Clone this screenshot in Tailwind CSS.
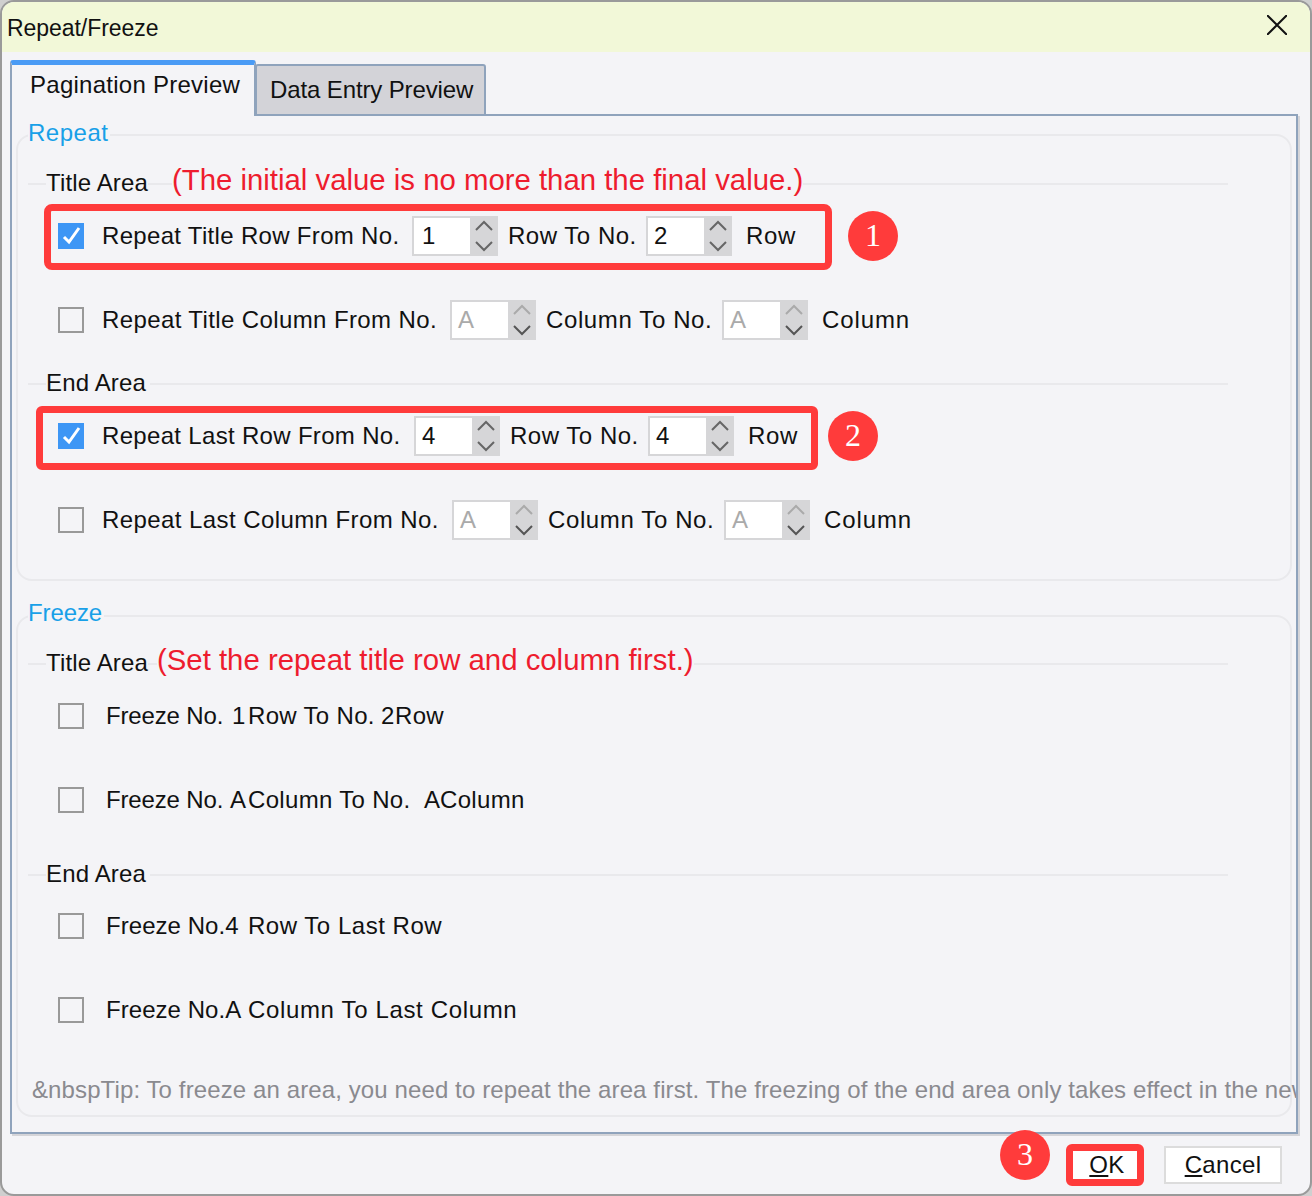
<!DOCTYPE html>
<html><head><meta charset="utf-8"><script src="https://cdn.jsdelivr.net/npm/@tailwindcss/browser@4"></script></head>
<body class="m-0">
<div class="w-[1312px] h-[1196px] overflow-hidden bg-[#cfcfcf] font-['Liberation_Sans',Arial,sans-serif] text-[24px] tracking-[0.32px] text-[#111]">
<div class="w-[1312px] h-[1196px] rounded-[14px] border-2 border-[#9a9a9a] bg-[#f4f4f7] flex flex-col overflow-hidden">
  <div class="relative h-[50px] shrink-0 bg-[#f2f8d8] flex items-center pl-[5px] pt-[2px] text-[23px] tracking-[-0.05px]">Repeat/Freeze
    <svg class="absolute left-[1265px] top-[13px]" width="20" height="20" viewBox="0 0 20 20"><path d="M0 0L20 20M20 0L0 20" stroke="#111" stroke-width="2" fill="none"/></svg>
  </div>
  <div class="flex h-[56px] mt-[8px] ml-[8px] shrink-0 items-end relative z-10">
    <div class="w-[246px] h-[56px] bg-[#f4f4f7] border-x-2 border-[#8fa3bc] border-t-[5px] border-t-[#4a9bf5] rounded-t-[3px] pl-[18px] pt-[2px] tracking-[0.26px]">Pagination Preview</div>
    <div class="-ml-[1px] w-[231px] h-[52px] bg-[#d3d3d8] border-2 border-[#8fa3bc] rounded-t-[3px] pl-[13px] pt-[6px] tracking-[-0.12px]">Data Entry Preview</div>
  </div>
  <div class="-mt-[2px] ml-[8px] mr-[12px] h-[1020px] shrink-0 border-2 border-[#8fa3bc] shadow-[2px_2px_0_#d4d4d8] overflow-hidden pt-[18px] px-[4px]">
    <section class="relative w-[1276px] h-[447px] border-2 border-[#e9e9ec] rounded-[16px] pt-[36px]">
      <div class="absolute left-[10px] -top-[21px] bg-[#f4f4f7] pr-[2px] text-[#18a0e8] tracking-[0.5px]">Repeat</div>
      <div class="relative h-[24px] ml-[10px]">
        <div class="absolute left-0 top-[11px] w-[1200px] h-[2px] bg-[#e9e9ec]"></div>
        <div class="absolute left-[18px] -top-[1px] h-[24px] leading-[24px] bg-[#f4f4f7] tracking-[0.15px]">Title Area</div>
        <div class="absolute left-[144px] -top-[8px] leading-[32px] text-[29.35px] tracking-normal text-[#ee1c2e] whitespace-nowrap bg-[#f4f4f7]">(The initial value is no more than the final value.)</div>
      </div>
      <div class="relative flex items-center h-[48px] mt-[16px] pl-[40px]">
        <div class="absolute left-[26px] -top-[8px] w-[788px] h-[66px] border-[7px] border-[#ff3b3b] rounded-[8px]"></div>
        <svg width="26" height="26" viewBox="0 0 26 26" class="shrink-0"><rect width="26" height="26" fill="#3d96f5"/><path d="M6 14l5 5 10-14" stroke="#fff" stroke-width="3" fill="none"/></svg>
        <span class="ml-[18px] w-[310px] whitespace-nowrap pb-[1px]">Repeat Title Row From No.</span>
        <div class="flex w-[86px] h-[40px] bg-[#d6d6d8] p-[2px] pr-0"><span class="w-[56px] bg-white pl-[8px] leading-[36px]">1</span><svg width="28" height="36" viewBox="0 0 28 36"><path d="M6 12l8-8 8 8M6 24l8 8 8-8" stroke="#666" stroke-width="2" fill="none"/></svg></div>
        <span class="ml-[10px] w-[138px] whitespace-nowrap pb-[1px] tracking-[0.52px]">Row To No.</span>
        <div class="flex w-[86px] h-[40px] bg-[#d6d6d8] p-[2px] pr-0"><span class="w-[56px] bg-white pl-[6px] leading-[36px]">2</span><svg width="28" height="36" viewBox="0 0 28 36"><path d="M6 12l8-8 8 8M6 24l8 8 8-8" stroke="#666" stroke-width="2" fill="none"/></svg></div>
        <span class="ml-[14px] whitespace-nowrap pb-[1px] tracking-[0.6px]">Row</span>
        <span class="absolute left-[830px] top-[-1px] w-[50px] h-[50px] rounded-full bg-[#ff3b3b] text-white font-['Liberation_Serif',serif] text-[32px] tracking-normal pb-[2px] flex items-center justify-center">1</span>
      </div>
      <div class="flex items-center h-[48px] mt-[36px] pl-[40px]">
        <span class="w-[26px] h-[26px] shrink-0 border-2 border-[#999]"></span>
        <span class="ml-[18px] w-[348px] whitespace-nowrap pb-[1px] tracking-[0.39px]">Repeat Title Column From No.</span>
        <div class="flex w-[86px] h-[40px] bg-[#d6d6d8] p-[2px] pr-0"><span class="w-[56px] bg-white pl-[6px] leading-[36px] text-[#aaa]">A</span><svg width="28" height="36" viewBox="0 0 28 36"><path d="M6 12l8-8 8 8" stroke="#aaa" stroke-width="2" fill="none"/><path d="M6 24l8 8 8-8" stroke="#555" stroke-width="2" fill="none"/></svg></div>
        <span class="ml-[10px] w-[176px] whitespace-nowrap pb-[1px] tracking-[0.62px]">Column To No.</span>
        <div class="flex w-[86px] h-[40px] bg-[#d6d6d8] p-[2px] pr-0"><span class="w-[56px] bg-white pl-[6px] leading-[36px] text-[#aaa]">A</span><svg width="28" height="36" viewBox="0 0 28 36"><path d="M6 12l8-8 8 8" stroke="#aaa" stroke-width="2" fill="none"/><path d="M6 24l8 8 8-8" stroke="#555" stroke-width="2" fill="none"/></svg></div>
        <span class="ml-[14px] whitespace-nowrap pb-[1px] tracking-[0.9px]">Column</span>
      </div>
      <div class="relative h-[24px] mt-[28px] ml-[10px]">
        <div class="absolute left-0 top-[11px] w-[1200px] h-[2px] bg-[#e9e9ec]"></div>
        <div class="absolute left-[18px] -top-[1px] h-[24px] leading-[24px] bg-[#f4f4f7] pr-[4px] tracking-[0.15px]">End Area</div>
      </div>
      <div class="relative flex items-center h-[48px] mt-[16px] pl-[40px]">
        <div class="absolute left-[18px] -top-[6px] w-[782px] h-[64px] border-[7px] border-[#ff3b3b] rounded-[6px]"></div>
        <svg width="26" height="26" viewBox="0 0 26 26" class="shrink-0"><rect width="26" height="26" fill="#3d96f5"/><path d="M6 14l5 5 10-14" stroke="#fff" stroke-width="3" fill="none"/></svg>
        <span class="ml-[18px] w-[312px] whitespace-nowrap pb-[1px]">Repeat Last Row From No.</span>
        <div class="flex w-[86px] h-[40px] bg-[#d6d6d8] p-[2px] pr-0"><span class="w-[56px] bg-white pl-[6px] leading-[36px]">4</span><svg width="28" height="36" viewBox="0 0 28 36"><path d="M6 12l8-8 8 8M6 24l8 8 8-8" stroke="#666" stroke-width="2" fill="none"/></svg></div>
        <span class="ml-[10px] w-[138px] whitespace-nowrap pb-[1px] tracking-[0.52px]">Row To No.</span>
        <div class="flex w-[86px] h-[40px] bg-[#d6d6d8] p-[2px] pr-0"><span class="w-[56px] bg-white pl-[6px] leading-[36px]">4</span><svg width="28" height="36" viewBox="0 0 28 36"><path d="M6 12l8-8 8 8M6 24l8 8 8-8" stroke="#666" stroke-width="2" fill="none"/></svg></div>
        <span class="ml-[14px] whitespace-nowrap pb-[1px] tracking-[0.6px]">Row</span>
        <span class="absolute left-[810px] top-[-1px] w-[50px] h-[50px] rounded-full bg-[#ff3b3b] text-white font-['Liberation_Serif',serif] text-[32px] tracking-normal pb-[2px] flex items-center justify-center">2</span>
      </div>
      <div class="flex items-center h-[48px] mt-[36px] pl-[40px]">
        <span class="w-[26px] h-[26px] shrink-0 border-2 border-[#999]"></span>
        <span class="ml-[18px] w-[350px] whitespace-nowrap pb-[1px] tracking-[0.42px]">Repeat Last Column From No.</span>
        <div class="flex w-[86px] h-[40px] bg-[#d6d6d8] p-[2px] pr-0"><span class="w-[56px] bg-white pl-[6px] leading-[36px] text-[#aaa]">A</span><svg width="28" height="36" viewBox="0 0 28 36"><path d="M6 12l8-8 8 8" stroke="#aaa" stroke-width="2" fill="none"/><path d="M6 24l8 8 8-8" stroke="#555" stroke-width="2" fill="none"/></svg></div>
        <span class="ml-[10px] w-[176px] whitespace-nowrap pb-[1px] tracking-[0.62px]">Column To No.</span>
        <div class="flex w-[86px] h-[40px] bg-[#d6d6d8] p-[2px] pr-0"><span class="w-[56px] bg-white pl-[6px] leading-[36px] text-[#aaa]">A</span><svg width="28" height="36" viewBox="0 0 28 36"><path d="M6 12l8-8 8 8" stroke="#aaa" stroke-width="2" fill="none"/><path d="M6 24l8 8 8-8" stroke="#555" stroke-width="2" fill="none"/></svg></div>
        <span class="ml-[14px] whitespace-nowrap pb-[1px] tracking-[0.9px]">Column</span>
      </div>
    </section>
    <section class="relative w-[1276px] h-[502px] mt-[34px] border-2 border-[#e9e9ec] rounded-[16px] pt-[35px]">
      <div class="absolute left-[10px] -top-[22px] bg-[#f4f4f7] pr-[2px] text-[#18a0e8] tracking-[-0.1px]">Freeze</div>
      <div class="relative h-[24px] ml-[10px]">
        <div class="absolute left-0 top-[11px] w-[1200px] h-[2px] bg-[#e9e9ec]"></div>
        <div class="absolute left-[18px] -top-[1px] h-[24px] leading-[24px] bg-[#f4f4f7] tracking-[0.15px]">Title Area</div>
        <div class="absolute left-[129px] -top-[8px] leading-[32px] text-[29.35px] tracking-normal text-[#ee1c2e] whitespace-nowrap bg-[#f4f4f7]">(Set the repeat title row and column first.)</div>
      </div>
      <div class="flex items-center h-[48px] mt-[16px] pl-[40px] whitespace-nowrap">
        <span class="w-[26px] h-[26px] shrink-0 border-2 border-[#999]"></span>
        <span class="ml-[22px] w-[126px] pb-[1px] tracking-[-0.15px]">Freeze No.</span><span class="w-[16px] pb-[1px]">1</span><span class="w-[133px] pb-[1px]">Row To No.</span><span class="w-[14px] pb-[1px]">2</span><span class="pb-[1px]">Row</span>
      </div>
      <div class="flex items-center h-[48px] mt-[36px] pl-[40px] whitespace-nowrap">
        <span class="w-[26px] h-[26px] shrink-0 border-2 border-[#999]"></span>
        <span class="ml-[22px] w-[124px] pb-[1px] tracking-[-0.15px]">Freeze No.</span><span class="w-[18px] pb-[1px]">A</span><span class="w-[176px] pb-[1px]">Column To No.</span><span class="w-[16px] pb-[1px]">A</span><span class="pb-[1px]">Column</span>
      </div>
      <div class="relative h-[24px] mt-[39px] ml-[10px]">
        <div class="absolute left-0 top-[11px] w-[1200px] h-[2px] bg-[#e9e9ec]"></div>
        <div class="absolute left-[18px] -top-[1px] h-[24px] leading-[24px] bg-[#f4f4f7] pr-[4px] tracking-[0.15px]">End Area</div>
      </div>
      <div class="flex items-center h-[48px] mt-[15px] pl-[40px] whitespace-nowrap">
        <span class="w-[26px] h-[26px] shrink-0 border-2 border-[#999]"></span>
        <span class="ml-[22px] w-[142px] pb-[1px] tracking-[0.05px]">Freeze No.4</span><span class="pb-[1px] tracking-[0.52px]">Row To Last Row</span>
      </div>
      <div class="flex items-center h-[48px] mt-[36px] pl-[40px] whitespace-nowrap">
        <span class="w-[26px] h-[26px] shrink-0 border-2 border-[#999]"></span>
        <span class="ml-[22px] w-[142px] pb-[1px] tracking-[0.05px]">Freeze No.A</span><span class="pb-[1px] tracking-[0.65px]">Column To Last Column</span>
      </div>
      <div class="h-[24px] mt-[44px] ml-[14px] leading-[24px] whitespace-nowrap text-[#8a8a8f] tracking-[0.11px]">&amp;nbspTip: To freeze an area, you need to repeat the area first. The freezing of the end area only takes effect in the new page.</div>
    </section>
  </div>
  <div class="relative flex-1 flex justify-end items-center gap-[20px] pr-[28px] pt-[2px]">
    <span class="absolute left-[998px] top-[-4px] w-[50px] h-[50px] rounded-full bg-[#ff3b3b] text-white font-['Liberation_Serif',serif] text-[32px] tracking-normal pb-[2px] flex items-center justify-center">3</span>
    <div class="w-[78px] h-[42px] border-[7px] border-[#ff3b3b] rounded-[6px] bg-white flex items-center justify-center pl-[4px]"><span><span class="underline">O</span>K</span></div>
    <div class="w-[118px] h-[38px] border-2 border-[#dcdcdc] bg-white flex items-center justify-center"><span><span class="underline">C</span>ancel</span></div>
  </div>
</div>
</div>
</body></html>
